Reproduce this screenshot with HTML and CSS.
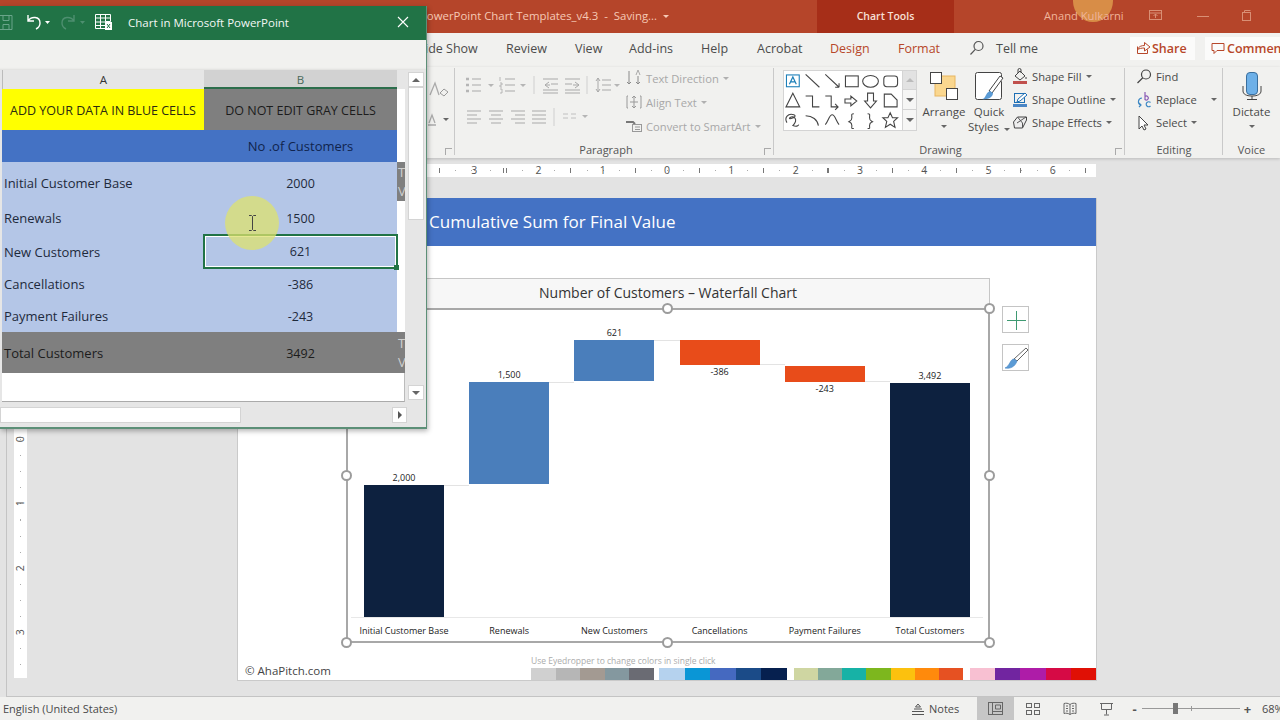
FILE: index.html
```html
<!DOCTYPE html>
<html lang="en">
<head>
<meta charset="utf-8">
<title>PowerPoint Chart Templates</title>
<link rel="stylesheet" href="styles.css">
</head>
<body>
<div class="app">
  <header class="titlebar">
    <span class="doc-title">PowerPoint Chart Templates_v4.3&nbsp; -&nbsp; Saving... <i class="tcaret"></i></span>
    <span class="ctx-tab">Chart Tools</span>
    <span class="user">Anand Kulkarni</span>
    <svg class="winbtns" width="130" height="16" viewBox="0 0 130 16" fill="none" stroke="#d98f75"><rect x="28.500" y="2.500" width="12" height="9"/><path d="M28 5h13M34.500 10V6M32.500 8l2-2 2 2"/><path d="M76 8.500h12"/><rect x="121.500" y="4.500" width="8" height="8"/><path d="M123.500 4.500v-2h6"/></svg>
    <i class="glow"></i>
  </header>

  <nav class="tabs">
    <span class="tab t-slide">Slide Show</span>
    <span class="tab t-review">Review</span>
    <span class="tab t-view">View</span>
    <span class="tab t-add">Add-ins</span>
    <span class="tab t-help">Help</span>
    <span class="tab t-acro">Acrobat</span>
    <span class="tab ctx t-design">Design</span>
    <span class="tab ctx t-format">Format</span>
    <svg class="t-search" width="16" height="16" viewBox="0 0 16 16" fill="none" stroke="#555" stroke-width="1.200"><circle cx="9.500" cy="6" r="4.500"/><path d="M6.300 9.300L1.500 14.500"/></svg>
    <span class="tab t-tell">Tell me</span>
    <span class="pill t-share"><svg width="16" height="14" viewBox="0 0 16 14" fill="none" stroke="#b7472a"><path d="M1.500 5.500v7h10v-4M1.500 8.500c1-3 4-4 7-4V1.500l5.500 4.500-5.500 4V7c-3 0-5 .5-7 1.500z"/></svg>Share</span>
    <span class="pill t-comm"><svg width="14" height="13" viewBox="0 0 14 13" fill="none" stroke="#b7472a"><path d="M1 1.500h12v7H6l-3 3v-3H1z"/></svg>Comments</span>
  </nav>

  <section class="ribbon">
    <div class="rgroup g-font">
      <div class="stubs">
        <svg width="24" height="60" viewBox="0 0 24 60" fill="none" stroke="#aaa"><path d="M3 20L8 8l4 12" stroke-width="1.300"/><path d="M13 18l4-4 4 3-4 4z" stroke="#999"/><path d="M2 48l3-8 3 8" stroke-width="1.300"/><path d="M1 50h8" stroke="#bbb" stroke-width="2"/><path d="M16 43h6l-3 3z" fill="#666" stroke="none"/></svg>
      </div>
      <i class="launch"></i>
    </div>

    <div class="rgroup g-para">
      <div class="rbody">
        <div class="para-left">
          <svg class="pr1" width="173" height="20" viewBox="0 0 173 20" fill="none" stroke="#a9a9a9">
            <path d="M11 4h3M11 10h3M11 16h3" stroke-width="2.500" stroke="#b5b5b5"/><path d="M17 4h9M17 10h9M17 16h9"/><path d="M33 9h6l-3 3z" fill="#b5b5b5" stroke="none"/>
            <path d="M45 2v4M45 8h2v2h-2v2h2M45 14h2v4h-2" stroke-width=".8"/><path d="M50 4h10M50 10h10M50 16h10"/><path d="M65 9h6l-3 3z" fill="#b5b5b5" stroke="none"/>
            <path d="M79 1v18M132 1v18" stroke="#cfcfcf"/>
            <path d="M88 4h15M96 9h7M88 15h15M88 18h15M94 7l-4 3 4 3M90 10h5"/>
            <path d="M110 4h15M110 9h7M110 15h15M110 18h15M120 7l4 3-4 3M124 10h-6"/>
            <path d="M143 3v14M141 6l2-3 2 3M141 14l2 3 2-3"/><path d="M147 5h9M147 10h9M147 15h9"/><path d="M159 9h6l-3 3z" fill="#b5b5b5" stroke="none"/>
          </svg>
          <svg class="pr2" width="173" height="20" viewBox="0 0 173 20" fill="none" stroke="#a9a9a9">
            <path d="M12 3h14M12 7h10M12 11h14M12 15h10"/>
            <path d="M34 3h14M36 7h10M34 11h14M36 15h10"/>
            <path d="M56 3h14M60 7h10M56 11h14M60 15h10"/>
            <path d="M77 3h14M77 7h14M77 11h14M77 15h14"/>
            <path d="M99 0v18" stroke="#cfcfcf"/>
            <path d="M108 6h5M108 10h5M116 6h5M116 10h5" stroke="#c0c0c0"/><path d="M127 7h6l-3 3z" fill="#b5b5b5" stroke="none"/>
          </svg>
        </div>
        <div class="para-right">
          <div class="cmd dis"><svg width="16" height="18" viewBox="0 0 16 18" fill="none" stroke="#8a8a8a"><path d="M3 2v13M1 13l2 2 2-2M12 7v8M10 13l2 2 2-2"/><path d="M10 6l2-5 2 5" stroke="#aaa"/></svg>Text Direction <i class="caret"></i></div>
          <div class="cmd dis"><svg width="16" height="18" viewBox="0 0 16 18" fill="none" stroke="#999"><path d="M2 3H1v12h1M14 3h1v12h-1M4 9h8M8 3v12M6 5l2-2 2 2M6 13l2 2 2-2"/></svg>Align Text <i class="caret"></i></div>
          <div class="cmd dis"><svg width="16" height="18" viewBox="0 0 16 18" fill="none" stroke="#999"><path d="M0 5h7l2 2" stroke="#777" stroke-width="2"/><rect x="6.500" y="7.500" width="9" height="7"/><path d="M9 10h5M9 12.500h5"/></svg>Convert to SmartArt <i class="caret"></i></div>
        </div>
      </div>
      <div class="rlabel">Paragraph</div>
      <i class="launch"></i>
    </div>

    <div class="rgroup g-draw">
      <div class="rbody">
        <div class="gallery">
          <svg width="120" height="60" viewBox="0 0 120 60" fill="none" stroke="#444" stroke-width="1.100">
            <rect x="2.500" y="3.500" width="13" height="12" stroke="#1c7fb8"/><path d="M5.500 13l3.500-7.500 3.500 7.500M6.800 10.500h4.500" stroke="#1c7fb8" stroke-width="1.200"/>
            <path d="M22 3l14 13"/><path d="M42 3l14 13M56 16h-4M56 16v-4"/>
            <rect x="62.500" y="4.500" width="13" height="11"/><ellipse cx="88" cy="10" rx="8" ry="6"/><rect x="101.500" y="4.500" width="14" height="11" rx="3"/>
            <path d="M9 22l7 14H2z"/><path d="M22 25h7v11h7"/><path d="M42 25h6v11h7M52 33l3 3-3 3"/>
            <path d="M62 28h6v-3l6 5-6 5v-3h-6z"/><path d="M85 22h6v8h3l-6 7-6-7h3z"/><path d="M102 23h7l6 6v7h-13z"/>
            <path d="M3 52c-3-5 1-10 7-8 5 2-7 6-4 3 4-3 9 2 3 8 5 2 6-1 6-1"/><path d="M22 45c7 0 12 4 13 10"/><path d="M42 54c3-3 4-10 7-10s4 7 7 10"/>
            <path d="M71 43c-3 0-2 1-2 4s-1 3-3 4c2 1 3 1 3 4s-1 3 2 3"/><path d="M85 43c3 0 2 1 2 4s1 3 3 4c-2 1-3 1-3 4s1 3-2 3"/>
            <path d="M108 42l2.300 5h5.200l-4 3.800 1.400 6-4.900-3.200-4.900 3.200 1.400-6-4-3.800h5.200z"/>
          </svg>
          <div class="gscroll">
            <span class="gb gdis"><i class="up"></i></span>
            <span class="gb"><i class="down"></i></span>
            <span class="gb gmore"><i class="down"></i></span>
          </div>
        </div>
        <div class="bigbtn b-arr">
          <svg width="30" height="30" viewBox="0 0 30 30"><rect x="6" y="5" width="20" height="20" fill="#fad78f" stroke="#e8b660"/><rect x="1.500" y="1.500" width="11" height="11" fill="#fff" stroke="#444"/><rect x="17.500" y="17.500" width="11" height="11" fill="#fff" stroke="#444"/></svg>
          <span>Arrange</span><i class="caret"></i>
        </div>
        <div class="bigbtn b-qs">
          <svg width="30" height="30" viewBox="0 0 30 30" fill="none"><rect x="1.500" y="1.500" width="26" height="27" rx="2" fill="#fff" stroke="#444"/><path d="M27 7L15 20" stroke="#fff" stroke-width="5"/><path d="M26 5l3 2-11 15-3-2z" fill="#fff" stroke="#444"/><path d="M8 28c4 0 3-6 8-8l3 2c0 4-5 7-11 6z" fill="#5b9bd5"/></svg>
          <span>Quick</span><span>Styles <i class="caret"></i></span>
        </div>
        <div class="cmds">
          <div class="cmd"><svg width="16" height="18" viewBox="0 0 16 18" fill="none" stroke="#444"><path d="M3 8l5-5 5 5-5 4z"/><path d="M6 5V2a1.500 1.500 0 013 0v3"/><path d="M14 9v2"/><rect x="1" y="13" width="14" height="3" fill="#c0504d" stroke="none"/></svg>Shape Fill <i class="caret"></i></div>
          <div class="cmd"><svg width="16" height="18" viewBox="0 0 16 18" fill="none" stroke="#1c6fb5"><rect x="2.500" y="2.500" width="10" height="9"/><path d="M5 11l1-3 7-6 2 2-7 6z" fill="#fff"/><rect x="1" y="13" width="14" height="3" fill="#4a86c5" stroke="none"/></svg>Shape Outline <i class="caret"></i></div>
          <div class="cmd"><svg width="16" height="18" viewBox="0 0 16 18" fill="none" stroke="#444"><path d="M1.500 8l4-5h9v3l-4 8h-8z" fill="#eee"/><path d="M5 9l9-6M5.500 3l5 6v5" stroke="#555"/></svg>Shape Effects <i class="caret"></i></div>
        </div>
      </div>
      <div class="rlabel">Drawing</div>
      <i class="launch"></i>
    </div>

    <div class="rgroup g-edit">
      <div class="rbody">
        <div class="cmds">
          <div class="cmd"><svg width="16" height="18" viewBox="0 0 16 18" fill="none" stroke="#444" stroke-width="1.200"><circle cx="10" cy="6.500" r="4.500"/><path d="M6.800 9.800L1.500 15"/></svg>Find</div>
          <div class="cmd"><svg width="16" height="18" viewBox="0 0 16 18" fill="none"><path d="M9 1v8M9 5.500a2 2 0 110 3" stroke="#8a5bb5" stroke-width="1.200"/><path d="M14.500 11.500a2.500 2.500 0 100 3.500" stroke="#3b87c4" stroke-width="1.200"/><path d="M6 7c-4 0-5 6-1 7M3 12l2 2-2 2" stroke="#3b87c4" stroke-width="1.200"/></svg>Replace <i class="caret far"></i></div>
          <div class="cmd"><svg width="16" height="18" viewBox="0 0 16 18" fill="none" stroke="#444"><path d="M3 2v13l3-3 2 4 2-1-2-4h4z" fill="#fff"/></svg>Select <i class="caret"></i></div>
        </div>
      </div>
      <div class="rlabel">Editing</div>
    </div>

    <div class="rgroup g-voice">
      <div class="rbody">
        <div class="bigbtn b-mic">
          <svg width="22" height="30" viewBox="0 0 22 30" fill="none" stroke="#444"><rect x="5.500" y="1.500" width="11" height="22" rx="3.500" fill="#6db0e8" stroke="#3a6f9e"/><path d="M2 15v5c0 3 3 5 9 5s9-2 9-5v-5M11 25v3M6 28.500h10"/></svg>
          <span>Dictate</span><i class="caret"></i>
        </div>
      </div>
      <div class="rlabel">Voice</div>
    </div>
  </section>

  <main class="workspace">
    <div class="hruler">
      <span>3</span><span>2</span><span>1</span><span>0</span><span>1</span><span>2</span><span>3</span><span>4</span><span>5</span><span>6</span>
    </div>
    <div class="stage">
      <div class="vruler"><span>0</span><span>1</span><span>2</span><span>3</span></div>
      <article class="slide">
        <h1 class="band">Cumulative Sum for Final Value</h1>
        <div class="chart">
          <div class="chart-title">Number of Customers – Waterfall Chart</div>
          <div class="chart-body">
            <div class="col col1"><span class="val">2,000</span><div class="bar navy lk-top"></div><span class="cat">Initial Customer Base</span></div>
            <div class="col col2"><span class="val">1,500</span><div class="bar blue lk-top"></div><span class="cat">Renewals</span></div>
            <div class="col col3"><span class="val">621</span><div class="bar blue lk-top"></div><span class="cat">New Customers</span></div>
            <div class="col col4"><div class="bar orange lk-bot"></div><span class="val">-386</span><span class="cat">Cancellations</span></div>
            <div class="col col5"><div class="bar orange lk-bot"></div><span class="val">-243</span><span class="cat">Payment Failures</span></div>
            <div class="col col6"><span class="val">3,492</span><div class="bar navy"></div><span class="cat">Total Customers</span></div>
            <i class="hd h-tl"></i><i class="hd h-tc"></i><i class="hd h-tr"></i><i class="hd h-ml"></i><i class="hd h-mr"></i><i class="hd h-bl"></i><i class="hd h-bc"></i><i class="hd h-br"></i>
            <div class="sidebtn sb-plus"><svg width="20" height="20" viewBox="0 0 20 20" stroke="#3f9a72"><path d="M1 10.500h19M10.500 1v19"/></svg></div>
            <div class="sidebtn sb-brush"><svg width="24" height="24" viewBox="0 0 24 24"><path d="M22 2l2 2-11 11-3-2z" fill="#fff" stroke="#666"/><path d="M1 22c5 1 10-1 12-7l-3-2c-4 0-4 7-9 9z" fill="#5b9bd5" stroke="#4a86c5" stroke-width=".6"/></svg></div>
          </div>
        </div>
        <footer class="slide-foot">
          <span class="copy">© AhaPitch.com</span>
          <div class="picker">
            <span class="hint">Use Eyedropper to change colors in single click</span>
            <div class="palette">
              <div class="swgroup g1"><i class="sw c1"></i><i class="sw c2"></i><i class="sw c3"></i><i class="sw c4"></i><i class="sw c5"></i></div>
              <div class="swgroup g2"><i class="sw c6"></i><i class="sw c7"></i><i class="sw c8"></i><i class="sw c9"></i><i class="sw c10"></i></div>
              <div class="swgroup g3"><i class="sw c11"></i><i class="sw c12"></i><i class="sw c13"></i><i class="sw c14"></i><i class="sw c15"></i><i class="sw c16"></i><i class="sw c17"></i></div>
              <div class="swgroup g4"><i class="sw c18"></i><i class="sw c19"></i><i class="sw c20"></i><i class="sw c21"></i><i class="sw c22"></i></div>
            </div>
          </div>
        </footer>
      </article>
    </div>
  </main>

  <footer class="status">
    <span class="lang">English (United States)</span>
    <span class="notes"><svg width="14" height="14" viewBox="0 0 14 14" fill="none" stroke="#555"><path d="M1 9.500h12M1 12.500h12M3 7h8M7 2L4.500 5h5z"/></svg>Notes</span>
    <span class="vbtn on"><svg width="16" height="14" viewBox="0 0 16 14" fill="none" stroke="#666"><rect x=".5" y=".5" width="14" height="12"/><path d="M4.500 .5v12M7.500 3h5v4h-5zM4.500 9.500h10"/></svg></span>
    <span class="vbtn"><svg width="16" height="14" viewBox="0 0 16 14" fill="none" stroke="#666"><rect x="1.500" y="1.500" width="5" height="4"/><rect x="9.500" y="1.500" width="5" height="4"/><rect x="1.500" y="8.500" width="5" height="4"/><rect x="9.500" y="8.500" width="5" height="4"/></svg></span>
    <span class="vbtn"><svg width="16" height="14" viewBox="0 0 16 14" fill="none" stroke="#666"><path d="M8 2.500C6 1 4 1 2 1.500v10c2-.5 4-.5 6 1 2-1.500 4-1.500 6-1v-10c-2-.5-4-.5-6 1zM8 2.500v10M4 4h2M4 6.500h2M4 9h2M10 4h2M10 6.500h2M10 9h2"/></svg></span>
    <span class="vbtn"><svg width="16" height="14" viewBox="0 0 16 14" fill="none" stroke="#666"><path d="M1 1.500h13M2.500 1.500v6h10v-6M7.500 7.500v5M5 13h5"/></svg></span>
    <div class="zoom"><b>-</b><div class="zslider"><i class="ztick"></i><i class="zthumb"></i></div><b>+</b></div>
    <span class="pct">68%</span>
  </footer>

  <aside class="excel">
    <div class="xl-title">
      <svg class="xl-qat" width="116" height="20" viewBox="0 0 116 20" fill="none">
        <path d="M0 3.500h12v14H0M3 3.500v5h6v-5M3 17.500v-5h6v5" stroke="#6aa58a"/>
        <path d="M28 3v6h6M28 9c3-5 12-5 12 2 0 3-2 5-4 6" stroke="#fff" stroke-width="1.400"/><path d="M45 9h5l-2.500 3z" fill="#fff"/>
        <path d="M74 3v6h-6M74 9c-3-5-12-5-12 2 0 3 2 5 4 6" stroke="#4e8f70" stroke-width="1.400"/><path d="M80 9h5l-2.500 3z" fill="#4e8f70"/>
        <path d="M95.500 2.500h15v7h-5v7h-10zM95.500 6h15M95.500 10h10M95.500 13.500h10M100.500 2.500v14M105.500 2.500v7" stroke="#fff"/><rect x="105" y="10" width="7" height="8" fill="#fff"/><path d="M107 12l3 4M110 12l-3 4" stroke="#217346"/>
      </svg>
      <span class="xl-name">Chart in Microsoft PowerPoint</span>
      <svg class="xl-close" width="12" height="12" viewBox="0 0 12 12" stroke="#fff" stroke-width="1.100"><path d="M1 1l10 10M11 1L1 11"/></svg>
    </div>
    <div class="xl-formula"></div>
    <div class="xl-sheet">
      <div class="xl-main">
        <div class="colhead"><span class="ch-a">A</span><span class="ch-b">B</span></div>
        <div class="grid">
          <div class="cell yellow">ADD YOUR DATA IN BLUE CELLS</div><div class="cell gray ctr">DO NOT EDIT GRAY CELLS</div><div class="cell blank"></div>
          <div class="cell hdr"></div><div class="cell hdr ctr">No .of Customers</div><div class="cell blank"></div>
          <div class="cell lb left r3">Initial Customer Base</div><div class="cell lb ctr r3">2000</div><div class="cell clip">T<br>V</div>
          <div class="cell lb left">Renewals</div><div class="cell lb ctr">1500</div><div class="cell blank"></div>
          <div class="cell lb left">New Customers</div><div class="cell lb ctr sel">621</div><div class="cell blank"></div>
          <div class="cell lb left">Cancellations</div><div class="cell lb ctr">-386</div><div class="cell blank"></div>
          <div class="cell lb left">Payment Failures</div><div class="cell lb ctr">-243</div><div class="cell blank"></div>
          <div class="cell gray left">Total Customers</div><div class="cell gray ctr">3492</div><div class="cell clip">T<br>V</div>
        </div>
      </div>
      <div class="vscroll"><span class="sbtn"><i class="up"></i></span><span class="vthumb"></span><span class="sbtn"><i class="down"></i></span></div>
    </div>
    <div class="hscroll"><span class="hthumb"></span><span class="sbtn hbtn"><i class="right"></i></span></div>
    <i class="cursor-glow"></i>
    <svg class="ibeam" width="9" height="16" viewBox="0 0 9 16" fill="none" stroke="#444"><path d="M1 .5h2.500l1 1 1-1H8M4.500 1.500v13M1 15.500h2.500l1-1 1 1H8"/></svg>
  </aside>
</div>
</body>
</html>
```
FILE: styles.css
```css
* { box-sizing: border-box; }
html, body { margin: 0; height: 100%; overflow: hidden; }
body { font-family: "Open Sans", "Noto Sans", sans-serif; font-size: 12px; color: #444; }
i { font-style: normal; display: block; }
.app { position: relative; width: 1280px; height: 720px; display: flex; flex-direction: column; overflow: hidden; background: #e3e3e3; }

/* title bar */
.titlebar { position: relative; height: 33px; flex: none; background: #b5452a; display: flex; align-items: center; color: #f6c9b5; font-size: 11.400px; padding-bottom: 2px; }
.doc-title { margin-left: 420px; width: 397px; white-space: nowrap; }
.tcaret { display: inline-block; width: 0; height: 0; border: 3px solid transparent; border-top-color: #f6c9b5; border-bottom: 0; margin: 0 0 2px 3px; }
.ctx-tab { width: 137px; height: 33px; margin-bottom: -2px; flex: none; background: #a62e18; color: #f8e0d6; font-weight: 600; font-size: 10.500px; display: flex; align-items: center; justify-content: center; padding-bottom: 2px; }
.user { position: relative; z-index: 1; margin-left: 90px; font-size: 11.200px; width: 100px; color: #f0b49a; white-space: nowrap; }
.winbtns { margin-left: -23px; flex: none; }
.glow { position: absolute; left: 1073px; top: -20px; width: 40px; height: 42px; border-radius: 50%; background: #de9a4c; opacity: .85; }

/* tabs */
.tabs { height: 34px; flex: none; background: #f1f1ef; display: flex; align-items: center; font-size: 12.500px; color: #4c4c4c; position: relative; padding-bottom: 4px; }
.tab { white-space: nowrap; flex: none; }
.tab.ctx { color: #b7472a; }
.t-slide { margin-left: 415px; width: 91px; }
.t-review { width: 69px; }
.t-view { width: 54px; }
.t-add { width: 72px; }
.t-help { width: 56px; }
.t-acro { width: 73px; }
.t-design { width: 68px; }
.t-format { width: 71px; }
.t-search { flex: none; }
.t-tell { margin-left: 11px; width: 134px; }
.pill { height: 23px; background: #fbfbfa; color: #b7472a; font-weight: 600; display: flex; align-items: center; padding-left: 6px; font-size: 12.500px; flex: none; }
.t-share { width: 65px; margin-right: 10px; }
.t-comm { width: 100px; gap: 2px; }

/* ribbon */
.ribbon { height: 91px; flex: none; background: #f1f1ef; display: flex; box-shadow: 0 1px 3px rgba(0,0,0,.18); position: relative; z-index: 1; }
.rgroup { position: relative; display: flex; flex-direction: column; flex: none; }
.rgroup::after { content: ""; position: absolute; right: 0; top: 1px; bottom: 3px; width: 1px; background: #c9c9c9; }
.g-font { width: 455px; }
.stubs { margin-left: 427px; margin-top: 8px; }
.g-para { width: 319px; }
.g-draw { width: 351px; }
.g-edit { width: 98px; }
.g-voice { width: 57px; }
.g-voice::after { display: none; }
.rbody { flex: 1; display: flex; min-height: 0; }
.rlabel { height: 18px; text-align: center; font-size: 11px; color: #555; line-height: 20px; }
.g-para .rlabel { padding-right: 17px; }
.g-draw .rlabel { padding-right: 18px; }
.launch { position: absolute; right: 3px; bottom: 3px; width: 7px; height: 7px; border-left: 1px solid #aaa; border-top: 1px solid #aaa; }
.para-left { width: 171px; flex: none; padding-top: 8px; display: flex; flex-direction: column; gap: 13px; }
.para-left svg { display: block; flex: none; }
.para-right { display: flex; flex-direction: column; margin-top: -1px; }
.cmd { height: 23px; display: flex; align-items: center; gap: 2px; white-space: nowrap; font-size: 11.200px; color: #4a4a4a; }
.cmd svg { margin-right: 2px; flex: none; }
.cmd.dis { color: #a8a8a8; height: 24px; }
.caret { display: inline-block; width: 0; height: 0; border: 3px solid transparent; border-top-color: #666; border-bottom: 0; margin-left: 2px; }
.dis .caret { border-top-color: #b0b0b0; }
.caret.far { margin-left: 12px; }
.gallery { margin: 3px 0 0 9px; width: 134px; height: 61px; background: #fff; border: 1px solid #d4d4d4; display: flex; }
.gallery svg { flex: 1; }
.gscroll { width: 14px; display: flex; flex-direction: column; flex: none; margin-left: auto; }
.gb { flex: 1; border-left: 1px solid #d4d4d4; border-top: 1px solid #d4d4d4; background: #f6f6f5; display: flex; align-items: center; justify-content: center; }
.gb:first-child { border-top: 0; }
.gb.gdis { background: #e2e2e2; }
.gmore { flex: 1.100; }
.up { width: 0; height: 0; border: 4px solid transparent; border-bottom-color: #666; border-top: 0; }
.down { width: 0; height: 0; border: 4px solid transparent; border-top-color: #666; border-bottom: 0; }
.right { width: 0; height: 0; border: 4px solid transparent; border-left-color: #555; border-right: 0; }
.gdis .up { border-bottom-color: #bbb; }
.bigbtn { display: flex; flex-direction: column; align-items: center; flex: none; padding-top: 4px; line-height: 15px; font-size: 11.500px; color: #4a4a4a; }
.bigbtn svg { margin-bottom: 3px; display: block; flex: none; }
.bigbtn > .caret { margin: 6px 0 0; }
.b-arr { width: 42px; margin-left: 6px; }
.b-qs { width: 44px; margin-left: 2px; }
.g-draw .cmds { margin-left: 1px; }
.cmds { margin-top: -2px; display: flex; flex-direction: column; }
.g-edit .cmds { margin-left: 11px; }
.b-mic { width: 57px; }

/* workspace */
.workspace { flex: 1; min-height: 0; display: flex; flex-direction: column; position: relative; }
.hruler { position: absolute; left: 0; top: 6px; width: 1096px; height: 13px; background-color: #fff; display: flex; padding-left: 442px; font-size: 10.500px; line-height: 13px; color: #555;
  background-image: repeating-linear-gradient(90deg, #777 0 1px, transparent 1px 64.300px), repeating-linear-gradient(90deg, #aaa 0 1px, transparent 1px 16.075px);
  background-position: 506px 4px, 474px 6px; background-size: auto 5px, auto 1px; background-repeat: repeat-x; }
.hruler span { width: 64.300px; flex: none; text-align: center; }
.stage { flex: 1; display: flex; margin: 40px 0 0 6px; padding-left: 7px; border-left: 1px solid #c4c4c4; border-bottom: 1px solid #c4c4c4; height: 0; min-height: 0; }
.vruler { width: 13px; height: 480px; flex: none; background: #fff; display: flex; flex-direction: column; padding-top: 180px; font-size: 10.500px; color: #555;
  background-image: repeating-linear-gradient(180deg, #aaa 0 1px, transparent 1px 16.075px); background-position: 6px 0; background-size: 1px 100%; background-repeat: no-repeat; }
.vruler span { height: 64.300px; flex: none; writing-mode: vertical-rl; transform: rotate(180deg); line-height: 13px; padding-bottom: 50px; }
.slide { margin-left: 210px; width: 860px; height: 483px; flex: none; background: #fff; border: 1px solid #cacaca; border-width: 0 1px 1px 1px; display: flex; flex-direction: column; }
.band { margin: 0; height: 48px; flex: none; background: #4472c4; color: #fff; font-size: 17px; font-weight: 400; line-height: 47px; padding-left: 191px; }

/* chart */
.chart { margin: 32px 0 0 108px; width: 644px; flex: none; position: relative; }
.chart-title { height: 31px; background: #f7f7f7; border: 1px solid #c6c6c6; border-bottom: 0; text-align: center; font-size: 14px; line-height: 28px; color: #333; }
.chart-body { position: relative; height: 335px; border: 2px solid #a8a8a8; padding-left: 3.400px; display: flex; margin-top: -1px; }
.col { width: 105.200px; flex: none; display: flex; flex-direction: column; align-items: center; }
.col1 { padding-top: 161px; } .col2 { padding-top: 58px; } .col3 { padding-top: 16px; } .col4 { padding-top: 30px; } .col5 { padding-top: 56px; } .col6 { padding-top: 59px; }
.val { height: 14px; line-height: 14px; font-size: 9px; color: #222; flex: none; }
.bar { width: 80px; flex: none; position: relative; }
.bar::after { content: none; position: absolute; left: 100%; width: 25.200px; height: 1px; background: #e3e3e3; }
.lk-top::after { content: ""; top: 0; }
.lk-bot::after { content: ""; bottom: 0; }
.navy { background: #0d213f; }
.blue { background: #4a7ebb; }
.orange { background: #e84c1a; }
.col1 .bar { height: 132px; } .col2 .bar { height: 102px; } .col3 .bar { height: 41px; } .col4 .bar { height: 25px; } .col5 .bar { height: 16px; } .col6 .bar { height: 234px; }
.cat { margin-top: auto; width: 105.200px; height: 24px; border-top: 1px solid #e8e8e8; text-align: center; line-height: 26px; font-size: 9px; color: #222; white-space: nowrap; flex: none; }
.hd { position: absolute; width: 11px; height: 11px; border-radius: 50%; background: #fff; border: 2px solid #9c9c9c; z-index: 2; }
.h-tl, .h-ml, .h-bl { left: -7px; }
.h-tc, .h-bc { left: 313.500px; }
.h-tr, .h-mr, .h-br { right: -7px; }
.h-tl, .h-tc, .h-tr { top: -7px; }
.h-ml, .h-mr { top: 160px; }
.h-bl, .h-bc, .h-br { bottom: -7px; }
.sidebtn { position: absolute; left: 654px; width: 27px; height: 27px; background: #fff; border: 1px solid #c4c4c4; display: flex; align-items: center; justify-content: center; }
.sb-plus { top: -4px; }
.sb-brush { top: 34px; }
.slide-foot { flex: 1; display: flex; position: relative; }
.copy { margin: 20px 0 0 7px; width: 288px; font-size: 11.500px; color: #444; }
.picker { display: flex; flex-direction: column; }
.hint { margin-top: 11px; height: 14px; font-size: 8.500px; color: #ababab; line-height: 14px; }
.palette { display: flex; height: 12px; width: 565px; }
.swgroup { display: flex; height: 12px; }
.g1 { width: 123px; margin-right: 5px; }
.g2 { width: 128px; margin-right: 7px; }
.g3 { width: 169px; margin-right: 7px; }
.g4 { width: 126px; }
.sw { flex: 1; }
.c1 { background: #d0d0d0; } .c2 { background: #b6b6b6; } .c3 { background: #a39a92; } .c4 { background: #84989f; } .c5 { background: #6a6b73; }
.c6 { background: #b5d2ee; } .c7 { background: #0a96d6; } .c8 { background: #4569c0; } .c9 { background: #1b4b88; } .c10 { background: #06204f; }
.c11 { background: #cfd6a2; } .c12 { background: #83a899; } .c13 { background: #17b2a6; } .c14 { background: #7db71e; } .c15 { background: #fcc10e; } .c16 { background: #ff8a0c; } .c17 { background: #e65122; }
.c18 { background: #f8c0d2; } .c19 { background: #7125a0; } .c20 { background: #ae1ca8; } .c21 { background: #d60a45; } .c22 { background: #e01005; }

/* status bar */
.status { height: 23px; flex: none; background: #f1f1ef; display: flex; align-items: center; font-size: 11px; color: #4a4a4a; }
.lang { margin-left: 3px; width: 908px; flex: none; }
.notes { display: flex; align-items: center; gap: 4px; width: 66px; flex: none; }
.vbtn { width: 37px; height: 23px; display: flex; align-items: center; justify-content: center; flex: none; }
.vbtn.on { background: #c6c6c6; }
.zoom { display: flex; align-items: center; margin-left: 5px; gap: 3px; width: 122px; flex: none; }
.zoom b { font-weight: 700; font-size: 13px; color: #555; width: 9px; text-align: center; }
.zslider { position: relative; flex: 1; height: 1px; background: #999; }
.zthumb { position: absolute; left: 31px; top: -5px; width: 5px; height: 11px; background: #777; }
.ztick { position: absolute; left: 49px; top: -2px; width: 1px; height: 5px; background: #999; }
.pct { margin-left: 10px; white-space: nowrap; flex: none; }

/* excel overlay */
.excel { position: absolute; left: 0; top: 6px; width: 427px; height: 423px; z-index: 5; background: #e6e6e6; border-right: 1px solid #5c8f77; border-bottom: 2px solid #5c8f77; box-shadow: 1px 2px 5px rgba(0,0,0,.3); display: flex; flex-direction: column; }
.xl-title { height: 34px; flex: none; background: #217346; display: flex; align-items: center; color: #fff; position: relative; padding-bottom: 2px; }
.xl-qat { flex: none; }
.xl-name { margin-left: 12px; font-size: 11.500px; width: 269px; white-space: nowrap; color: #f2f7f4; }
.xl-close { flex: none; }
.xl-formula { height: 30px; flex: none; background: #f1f1ef; box-shadow: inset 0 -3px 3px -3px rgba(0,0,0,.15); }
.xl-sheet { display: flex; flex: none; height: 333px; }
.xl-main { width: 405px; flex: none; padding-left: 2px; }
.colhead { display: flex; height: 19px; font-size: 11.500px; line-height: 20px; text-align: center; color: #333; }
.ch-a { width: 202px; background: #e6e6e6; border-left: 1px solid #bbb; }
.ch-b { width: 193px; background: #d2d2d2; color: #4a6a5a; border-bottom: 2px solid #2c6e4c; }
.grid { display: grid; grid-template-columns: 202px 193px 8px; grid-template-rows: 41px 32px 39px 34px 33px 32px 32px 41px 28px; background: #fff; border-bottom: 1px solid #aaa; height: 313px; font-size: 13px; color: #1e2a3c; position: relative; border-right: 1px solid #bbb; }
.cell { display: flex; align-items: center; white-space: nowrap; min-width: 0; }
.yellow, .gray { padding-top: 1px; }
.r3 { padding-top: 3px; }
.ctr { justify-content: center; }
.lb.ctr, .gray.ctr { font-size: 12.500px; }
.left { padding-left: 2px; }
.yellow { background: #ff0; justify-content: center; color: #2b2b10; font-size: 12.500px; }
.gray { background: #7f7f7f; color: #1c1c1c; }
.hdr { background: #4472c4; color: #10244d; }
.lb { background: #b4c6e7; }
.blank { background: #fff; }
.clip { background: #7f7f7f; color: #cfcfcf; overflow: hidden; padding-left: 1px; line-height: 19px; }
.sel { border: 2px solid #217346; box-shadow: inset 0 0 0 1px #fff; position: relative; margin: -1px; z-index: 1; }
.sel::after { content: ""; position: absolute; right: -3px; bottom: -3px; width: 5px; height: 5px; background: #217346; }
.vscroll { width: 22px; flex: none; padding: 2px 3px 0; display: flex; flex-direction: column; }
.sbtn { height: 15px; flex: none; background: #fff; border: 1px solid #d4d4d4; display: flex; align-items: center; justify-content: center; }
.vthumb { height: 133px; background: #fff; border: 1px solid #d4d4d4; flex: none; margin-bottom: 165px; }
.hscroll { height: 16px; flex: none; margin-top: 4px; display: flex; width: 407px; }
.hthumb { width: 241px; background: #fff; border: 1px solid #d4d4d4; }
.hbtn { margin-left: auto; width: 15px; height: 16px; }
.cursor-glow { position: absolute; left: 225px; top: 190px; width: 54px; height: 54px; border-radius: 50%; background: rgba(222,226,110,.75); z-index: 2; }
.ibeam { position: absolute; left: 248px; top: 209px; z-index: 3; }
```
